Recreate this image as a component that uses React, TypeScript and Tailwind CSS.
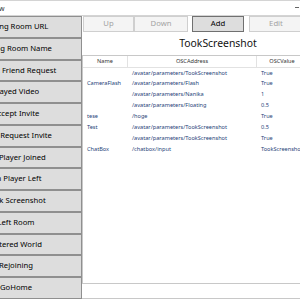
import React from "react";

const leftLabels = [
  "Joining Room URL",
  "Joining Room Name",
  "Accept Friend Request",
  "Played Video",
  "Accept Invite",
  "Send Request Invite",
  "On Player Joined",
  "On Player Left",
  "Took Screenshot",
  "Left Room",
  "Entered World",
  "Rejoining",
  "GoHome",
];

const rows: [string, string, string][] = [
  ["", "/avatar/parameters/TookScreenshot", "True"],
  ["CameraFlash", "/avatar/parameters/Flash", "True"],
  ["", "/avatar/parameters/Nanika", "1"],
  ["", "/avatar/parameters/Floating", "0.5"],
  ["tese", "/hoge", "True"],
  ["Test", "/avatar/parameters/TookScreenshot", "0.5"],
  ["", "/avatar/parameters/TookScreenshot", "True"],
  ["ChatBox", "/chatbox/input", "TookScreenshot"],
];

export default function App() {
  return (
    <div className="w-[300px] h-[300px] overflow-hidden bg-white flex flex-col font-['Noto_Sans',sans-serif]">
      {/* title bar */}
      <div className="h-[16px] shrink-0 border-t border-b border-[#d4d4d4] flex items-center justify-between">
        <span className="text-[7px] text-[#333] ml-[-22px] whitespace-nowrap leading-none">Window</span>
        <div className="w-[4px] h-[1px] bg-[#666] mr-[1px] mb-[2px]" />
      </div>
      {/* main */}
      <div className="flex h-[284px]">
        <div className="flex flex-col w-[132px] ml-[-50px] shrink-0 h-[283px]">
          {leftLabels.map((l) => (
            <div
              key={l}
              className="flex-1 border border-[#8f8f8f] bg-[#dddddd] text-[7.7px] text-black flex items-center justify-center whitespace-nowrap overflow-hidden leading-none"
            >
              {l}
            </div>
          ))}
        </div>
        <div className="w-[272px] shrink-0 flex flex-col">
          {/* toolbar */}
          <div className="flex h-[16px] pl-[1px] text-[7.7px] leading-none">
            <div className="w-[51px] border border-[#cfcfcf] bg-[#f4f4f4] text-[#a3a3a3] flex items-center justify-center">Up</div>
            <div className="w-[54px] border border-[#cfcfcf] bg-[#f4f4f4] text-[#a3a3a3] flex items-center justify-center">Down</div>
            <div className="w-[52px] ml-[4px] border border-[#707070] bg-[#dddddd] text-black flex items-center justify-center">Add</div>
            <div className="w-[54px] ml-[5px] border border-[#cfcfcf] bg-[#f4f4f4] text-[#a3a3a3] flex items-center justify-center">Edit</div>
          </div>
          {/* title */}
          <div className="h-[23px] flex items-center justify-center text-[10.4px] text-[#111] leading-none">
            TookScreenshot
          </div>
          {/* grid */}
          <div className="h-[229px] border border-[#c8c8c8] flex flex-col text-[5.6px] leading-none">
            <div className="h-[12px] flex border-b border-[#e2e2e2] text-[#333]">
              <div className="w-[45px] border-r border-[#e2e2e2] flex items-center justify-center">Name</div>
              <div className="w-[129px] border-r border-[#e2e2e2] flex items-center justify-center">OSCAddress</div>
              <div className="w-[51px] border-r border-[#e2e2e2] flex items-center justify-center">OSCValue</div>
            </div>
            {rows.map((r, i) => (
              <div key={i} className="h-[10.85px] flex items-center text-[#1f3f78] whitespace-nowrap">
                <div className="w-[45px] pl-[4px]">{r[0]}</div>
                <div className="w-[129px] pl-[4px]">{r[1]}</div>
                <div className="pl-[4px]">{r[2]}</div>
              </div>
            ))}
          </div>
          <div className="h-[15px] border-b border-[#c8c8c8]" />
        </div>
      </div>
    </div>
  );
}
